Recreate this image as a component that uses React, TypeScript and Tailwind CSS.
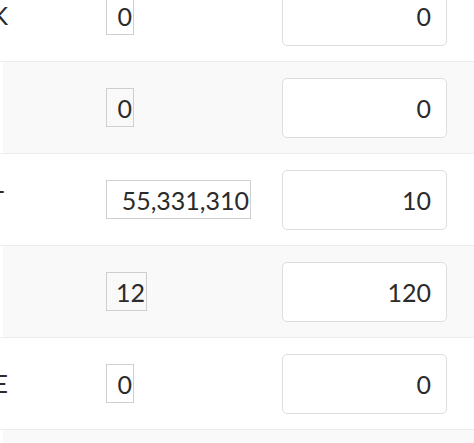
const rows = [
  { label: "STOCK", labelEnd: 8, qty: "0", value: "0", gray: false },
  { label: "", labelEnd: 0, qty: "0", value: "0", gray: true },
  { label: "UNIT COST", labelEnd: 4, qty: "55,331,310", value: "10", gray: false },
  { label: "", labelEnd: 0, qty: "12", value: "120", gray: true },
  { label: "PRICE", labelEnd: 8, qty: "0", value: "0", gray: false },
  { label: "", labelEnd: 0, qty: "0", value: "0", gray: true },
];

export default function App() {
  return (
    <div className="w-[474px] h-[443px] overflow-hidden bg-white font-['Lato','Liberation_Sans',sans-serif] text-[25px] text-[#2b2b2b]">
      <div className="-mt-[30px]">
        {rows.map((r, i) => (
          <div key={i} className="border-b border-[#ededed]">
            <div
              className={
                "ml-[3px] h-[91px] flex items-center " +
                (r.gray ? "bg-[#f9f9f9]" : "bg-white")
              }
            >
              {/* label column, text runs off the left edge */}
              <div className="w-[103px] shrink-0 flex">
                <div
                  className="flex justify-end whitespace-nowrap -ml-[3px]"
                  style={{ width: r.labelEnd }}
                >
                  {r.label}
                </div>
              </div>

              {/* read-only qty, sized by character count */}
              <div
                className="h-[39px] shrink-0 flex items-center justify-end border border-[#cfcfcf] pr-[1px] pt-[2px] leading-none"
                style={{ width: 15 + 13 * r.qty.length }}
              >
                {r.qty}
              </div>

              <div className="flex-1" />

              <div className="w-[165px] h-[60px] mr-[27px] flex items-center justify-end rounded-[5px] border border-[#dedede] bg-white pr-[15px] pt-[2px] leading-none">
                {r.value}
              </div>
            </div>
          </div>
        ))}
      </div>
    </div>
  );
}
